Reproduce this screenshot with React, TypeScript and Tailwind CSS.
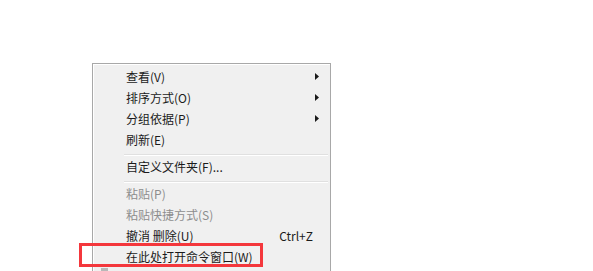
import React from "react";

type Item =
  | { kind: "sep" }
  | { kind: "item"; label: string; sub?: boolean; disabled?: boolean; shortcut?: string };

const ITEMS: Item[] = [
  { kind: "item", label: "查看(V)", sub: true },
  { kind: "item", label: "排序方式(O)", sub: true },
  { kind: "item", label: "分组依据(P)", sub: true },
  { kind: "item", label: "刷新(E)" },
  { kind: "sep" },
  { kind: "item", label: "自定义文件夹(F)..." },
  { kind: "sep" },
  { kind: "item", label: "粘贴(P)", disabled: true },
  { kind: "item", label: "粘贴快捷方式(S)", disabled: true },
  { kind: "item", label: "撤消 删除(U)", shortcut: "Ctrl+Z" },
  { kind: "item", label: "在此处打开命令窗口(W)" },
];

function Arrow() {
  return (
    <svg width="4" height="7" viewBox="0 0 4 7" className="block">
      <path d="M0 0 L4 3.5 L0 7 Z" fill="#1a1a1a" />
    </svg>
  );
}

function MenuRow({ item }: { item: Item }) {
  if (item.kind === "sep") {
    return (
      <div className="h-[6px] pl-[30px] pr-[2px] pt-[4px]">
        <div className="h-px bg-[#e0e0e0]" />
        <div className="h-px bg-white" />
      </div>
    );
  }
  return (
    <div
      className={`flex h-[21px] items-center pl-[32px] pr-[11px] text-[12px] leading-[14px] ${
        item.disabled ? "text-[#8d8d8d]" : "text-[#1b1b1b]"
      }`}
    >
      <span className="flex-1 whitespace-pre">{item.label}</span>
      {item.shortcut && <span className="mr-[6px]">{item.shortcut}</span>}
      {item.sub && <Arrow />}
    </div>
  );
}

export default function App() {
  return (
    <div
      className="relative h-[271px] w-[593px] overflow-hidden bg-white"
      style={{ fontFamily: '"Noto Sans CJK SC", "Noto Sans", sans-serif' }}
    >
      <div className="pl-[92px] pt-[63px]">
        <div className="w-[239px] border border-[#a8a8a8] bg-[#f0f0f0]">
          <div className="border-l border-t border-white pt-[1px]">
            {ITEMS.map((it, i) => (
              <MenuRow key={i} item={it} />
            ))}
            <div className="flex h-[10px] items-start pl-[7px] pt-[1px]">
              <div className="h-[4px] w-[7px] bg-[#b8b8b8]" />
            </div>
          </div>
        </div>
      </div>
      {/* red highlight over the last entry */}
      <div className="absolute left-[79px] top-[243px] h-[24px] w-[184px] border-[3px] border-[#f4373c]" />
    </div>
  );
}
